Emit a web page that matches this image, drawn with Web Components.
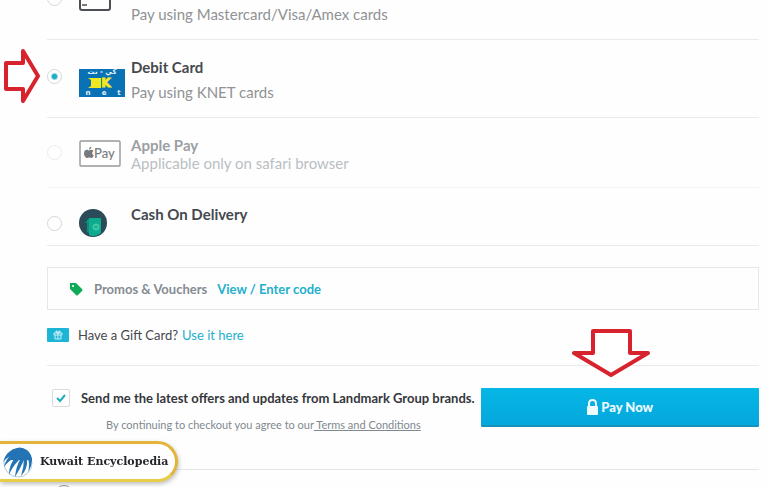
<!DOCTYPE html>
<html lang="en">
<head>
<meta charset="utf-8">
<title>Checkout - Payment</title>
<style>
  body {
    margin: 0;
    overflow: hidden;
    background: #fefefe;
    color: #45484d;
    font-family: Lato, "Open Sans", sans-serif;
    font-size: 13px;
  }
</style>
</head>
<body>
<checkout-page></checkout-page>

<script>
const ICONS = {
  card: `
    <svg width="32" height="20" viewBox="0 0 32 20" fill="none" stroke="#4c4f54" stroke-width="2">
      <rect x="1" y="1" width="30" height="18" rx="2"/>
      <path d="M3 14h5" stroke-width="1.5"/>
    </svg>`,
  knet: `
    <svg width="46" height="28" viewBox="0 0 46 28">
      <rect width="46" height="28" fill="#0872b5"/>
      <g font-family="'DejaVu Sans', sans-serif" font-weight="bold" text-anchor="middle">
        <g fill="#e6f3fb">
          <text x="23" y="5" font-size="7">كي - نت</text>
          <text x="9" y="26" font-size="7">n</text>
          <text x="25" y="26" font-size="7">e</text>
          <text x="40" y="26" font-size="7">t</text>
        </g>
        <path d="M9 9h13v10H9l3-2v-6z" fill="#f2e822"/>
        <text x="27" y="18" font-size="12" fill="#f2e822" stroke="#f2e822">K</text>
      </g>
    </svg>`,
  apple: `
    <svg width="42" height="27" viewBox="0 0 42 27">
      <rect x="1" y="1" width="40" height="25" rx="1" fill="#fff" stroke="#96989b" stroke-width="1.4"/>
      <g fill="#77797c">
        <path d="M10 10.500c.9 0 1.500-.7 2.500-.7.8 0 1.500.4 2 1.100-1.900 1.100-1.500 3.600.3 4.300-.5 1.500-1.500 2.800-2.600 2.800-.8 0-1.200-.4-2.100-.4s-1.300.4-2 .4C6.400 18 5 15.400 5 13.200c0-2.300 1.500-3.400 2.900-3.400.9 0 1.600.7 2.100.7zM10 9.500c0-1.500 1-2.500 2.300-2.700.1 1.500-1 2.700-2.300 2.700z"/>
        <text x="15" y="18" font-family="Lato, sans-serif" font-size="13" font-weight="500">Pay</text>
      </g>
    </svg>`,
  cash: `
    <svg width="28" height="28" viewBox="0 0 28 28">
      <circle cx="14" cy="14" r="14" fill="#2b4b58"/>
      <path d="M9 10l3-1v16l-4-2V14H6z" fill="#0b8f7f"/>
      <path d="M10 9h11q1 0 1 1v14q-6 5-12 2V10z" fill="#0eab8f"/>
      <circle cx="17" cy="18" r="3" fill="#2fc0a0" stroke="#4fd0ae"/>
      <path d="M15 18h4" stroke="#0eab8f"/>
    </svg>`,
};

// One row of the payment method list
class PaymentOption extends HTMLElement {
  connectedCallback() {
    const checked = this.hasAttribute('checked') ? 'checked' : '';
    const disabled = this.hasAttribute('disabled') ? 'disabled' : '';
    this.attachShadow({ mode: 'open' }).innerHTML = `
      <style>
        :host {
          display: block;
          border-bottom: 1px solid #e9eaeb;
        }
        label {
          display: flex;
          align-items: center;
          min-height: 77px;
        }
        input {
          appearance: none;
          flex: none;
          width: 15px;
          height: 15px;
          margin: 0 17px 4px 0;
          border: 1px solid #d4d6d8;
          border-radius: 50%;
          background: #fff;
        }
        input:checked {
          background: radial-gradient(circle, #20adc4 0 2px, #fff 4px);
        }
        input:disabled { border-color: #ececed; }
        .icon {
          flex: none;
          display: flex;
          width: 52px;
          padding-top: 8px;
        }
        .text {
          display: flex;
          flex-direction: column;
          padding-top: 3px;
          font-size: 15px;
          line-height: 25px;
          color: #909294;
        }
        .title {
          min-height: 25px;
          font-weight: bold;
          color: #45494e;
        }
        :host([icon="card"]) .icon { padding: 0; }

        :host([compact]) { border-color: #f1f2f2; }
        :host([compact]) label { min-height: 69px; }
        :host([compact]) .text { padding-top: 2px; line-height: 18px; color: #b9bec3; }
        :host([compact]) .title { min-height: 18px; color: #9c9fa3; }
        :host([compact]) input { margin-bottom: 0; }
        :host([compact]) .icon { padding-top: 2px; }

        :host([short]) label { min-height: 57px; }
        :host([short]) .text { padding: 0 0 4px; }
        :host([short]) input { margin-bottom: 0; margin-top: 14px; }
        :host([short]) .icon { padding-top: 12px; }
      </style>
      <label>
        <input type="radio" name="payment" aria-label="${this.getAttribute('icon')}" ${checked} ${disabled}>
        <span class="icon">${ICONS[this.getAttribute('icon')]}</span>
        <span class="text">
          <span class="title"><slot name="title"></slot></span>
          <slot></slot>
        </span>
      </label>
    `;
  }
}

class PromoBox extends HTMLElement {
  connectedCallback() {
    this.attachShadow({ mode: 'open' }).innerHTML = `
      <style>
        :host {
          display: flex;
          align-items: center;
          height: 41px;
          padding-left: 21px;
          border: 1px solid #e6e7e8;
          font-weight: bold;
          color: #858b92;
        }
        svg { margin-right: 11px; }
        a {
          margin-left: 10px;
          color: #23b0cb;
          text-decoration: none;
        }
      </style>
      <svg width="14" height="14" viewBox="0 0 14 14">
        <path d="M1 1h6l6 6q1 1 0 2l-4 4q-1 1-2 0L1 7z" fill="#0faa58"/>
        <circle cx="4" cy="4" r="1" fill="#fff"/>
      </svg>
      <span>Promos &amp; Vouchers</span>
      <a href="#promo">View / Enter code</a>
    `;
  }
}

class GiftCard extends HTMLElement {
  connectedCallback() {
    this.attachShadow({ mode: 'open' }).innerHTML = `
      <style>
        :host {
          display: flex;
          align-items: center;
          height: 50px;
          padding-bottom: 5px;
          border-bottom: 1px solid #e9eaeb;
        }
        svg { margin-right: 9px; }
        a {
          margin-left: 4px;
          color: #23b0cb;
          text-decoration: none;
        }
      </style>
      <svg width="22" height="14" viewBox="0 0 22 14">
        <rect width="22" height="14" rx="1" fill="#1cb5d6"/>
        <path d="M7 5h8v2H7zM8 7v4h6V7M11 5v6M11 5Q8 5 9 3q1-1 2 2 1-3 2-2 1 2-2 2" fill="none" stroke="#c9f0f8"/>
      </svg>
      <span>Have a Gift Card?</span>
      <a href="#gift">Use it here</a>
    `;
  }
}

class PayBar extends HTMLElement {
  connectedCallback() {
    this.attachShadow({ mode: 'open' }).innerHTML = `
      <style>
        :host {
          display: flex;
          align-items: flex-start;
          justify-content: space-between;
          height: 81px;
          padding-top: 22px;
          border-bottom: 1px solid #e4e8ea;
        }
        .consent {
          display: flex;
          flex-direction: column;
          gap: 8px;
          padding-left: 5px;
        }
        label {
          display: flex;
          align-items: center;
          gap: 11px;
          height: 20px;
          font-weight: bold;
          color: #35373b;
          white-space: nowrap;
        }
        .tick {
          display: grid;
        }
        .tick > * { grid-area: 1 / 1; place-self: center; }
        input {
          appearance: none;
          width: 18px;
          height: 18px;
          margin: 0;
          border: 1px solid #dcd9dd;
          border-radius: 2px;
          background: #fff;
        }
        svg { pointer-events: none; }
        input:not(:checked) + svg { visibility: hidden; }
        p {
          margin: 0;
          padding-left: 54px;
          font-size: 11px;
          line-height: 18px;
          color: #80898f;
        }
        a { color: inherit; }
        button {
          display: flex;
          align-items: center;
          justify-content: center;
          gap: 3px;
          width: 39%;
          height: 39px;
          border: 0;
          border-bottom: 2px solid #1592bb;
          border-radius: 1px;
          background: linear-gradient(#06b7e6, #05a7dc);
          color: #effbff;
          font: 900 13px Lato, sans-serif;
        }
      </style>
      <div class="consent">
        <label>
          <span class="tick">
            <input type="checkbox" checked>
            <svg width="10" height="10" viewBox="0 0 10 10" fill="none" stroke="#20adc4" stroke-width="2"><path d="M1 5l3 3 5-6"/></svg>
          </span>
          Send me the latest offers and updates from Landmark Group brands.
        </label>
        <p>By continuing to checkout you agree to our<a href="#terms"> Terms and Conditions</a></p>
      </div>
      <button type="button">
        <svg width="11" height="16" viewBox="0 0 11 16">
          <path d="M2 8V5q0-4 3.500-4T9 5v3" fill="none" stroke="#effbff" stroke-width="2"/>
          <rect y="7" width="11" height="9" rx="1" fill="#effbff"/>
        </svg>
        Pay Now
      </button>
    `;
  }
}

// Red outlined pointer, drawn over the page
class CalloutArrow extends HTMLElement {
  connectedCallback() {
    const down = this.getAttribute('direction') === 'down';
    this.attachShadow({ mode: 'open' }).innerHTML = `
      <style>
        :host { display: block; position: absolute; }
        svg { display: block; fill: #fff; stroke: #d7232e; stroke-width: 4; stroke-linejoin: round; }
      </style>
      ${down
        ? '<svg width="78" height="50" viewBox="0 0 78 50"><path d="M21 3h37v22h18L39 47 2 25h19z"/></svg>'
        : '<svg width="37" height="56" viewBox="0 0 37 56"><path d="M3 15h17V3l15 25-15 25V41H3z"/></svg>'}
    `;
  }
}

class SiteBadge extends HTMLElement {
  connectedCallback() {
    this.attachShadow({ mode: 'open' }).innerHTML = `
      <style>
        :host {
          position: fixed;
          left: 0;
          bottom: 5px;
          display: flex;
          align-items: center;
          gap: 6px;
          height: 35px;
          padding: 0 7px 0 2px;
          border: 3px solid #e3b437;
          border-bottom-color: #e8ce48;
          border-left: 0;
          border-radius: 0 21px 21px 0;
          background: #fff;
          box-shadow: 1px 2px 4px #8888;
          font: bold 11px "DejaVu Serif", serif;
          color: #25262a;
          white-space: nowrap;
        }
      </style>
      <svg width="32" height="32" viewBox="0 0 32 32">
        <circle cx="16" cy="17" r="14" fill="none" stroke="#b5c9da"/>
        <g fill="#2373b5">
          <path d="M10 4Q18-1 25 4q5 4 5 11l-5-1H9L7 9z"/>
          <path d="M12 3Q4 6 1 16q4-5 10-7z"/>
          <path d="M12 6Q4 12 2 21q5-7 11-9z"/>
          <path d="M14 11Q7 18 7 29q3-8 10-15z"/>
          <path d="M19 12q-5 8-6 19 5-8 9-17z"/>
          <path d="M22 12q0 9-3 18 7-7 6-17z"/>
          <path d="M26 12q2 7 0 14 4-6 4-14z"/>
        </g>
      </svg>
      <slot></slot>
    `;
  }
}

class CheckoutPage extends HTMLElement {
  connectedCallback() {
    this.attachShadow({ mode: 'open' }).innerHTML = `
      <style>
        :host { display: block; }
        main {
          display: flex;
          flex-direction: column;
          margin-top: -38px;
          padding: 0 9px 0 47px;
        }
        promo-box { margin-top: 21px; }
        .next {
          margin-top: 15px;
          margin-left: 7px;
          width: 18px;
          height: 18px;
          border: 1px solid #8d969c;
          border-radius: 50%;
        }
        .pay-arrow { right: 118px; top: 328px; }
        .card-arrow { left: 3px; top: 48px; }
      </style>
      <main>
        <payment-option icon="card">Pay using Mastercard/Visa/Amex cards</payment-option>
        <payment-option icon="knet" checked><span slot="title">Debit Card</span>Pay using KNET cards</payment-option>
        <payment-option icon="apple" compact disabled><span slot="title">Apple Pay</span>Applicable only on safari browser</payment-option>
        <payment-option icon="cash" short><span slot="title">Cash On Delivery</span></payment-option>
        <promo-box></promo-box>
        <gift-card></gift-card>
        <pay-bar></pay-bar>
        <div class="next"></div>
      </main>
      <callout-arrow class="card-arrow" direction="right"></callout-arrow>
      <callout-arrow class="pay-arrow" direction="down"></callout-arrow>
      <site-badge>Kuwait Encyclopedia</site-badge>
    `;
  }
}

customElements.define('payment-option', PaymentOption);
customElements.define('promo-box', PromoBox);
customElements.define('gift-card', GiftCard);
customElements.define('pay-bar', PayBar);
customElements.define('callout-arrow', CalloutArrow);
customElements.define('site-badge', SiteBadge);
customElements.define('checkout-page', CheckoutPage);
</script>
</body>
</html>
